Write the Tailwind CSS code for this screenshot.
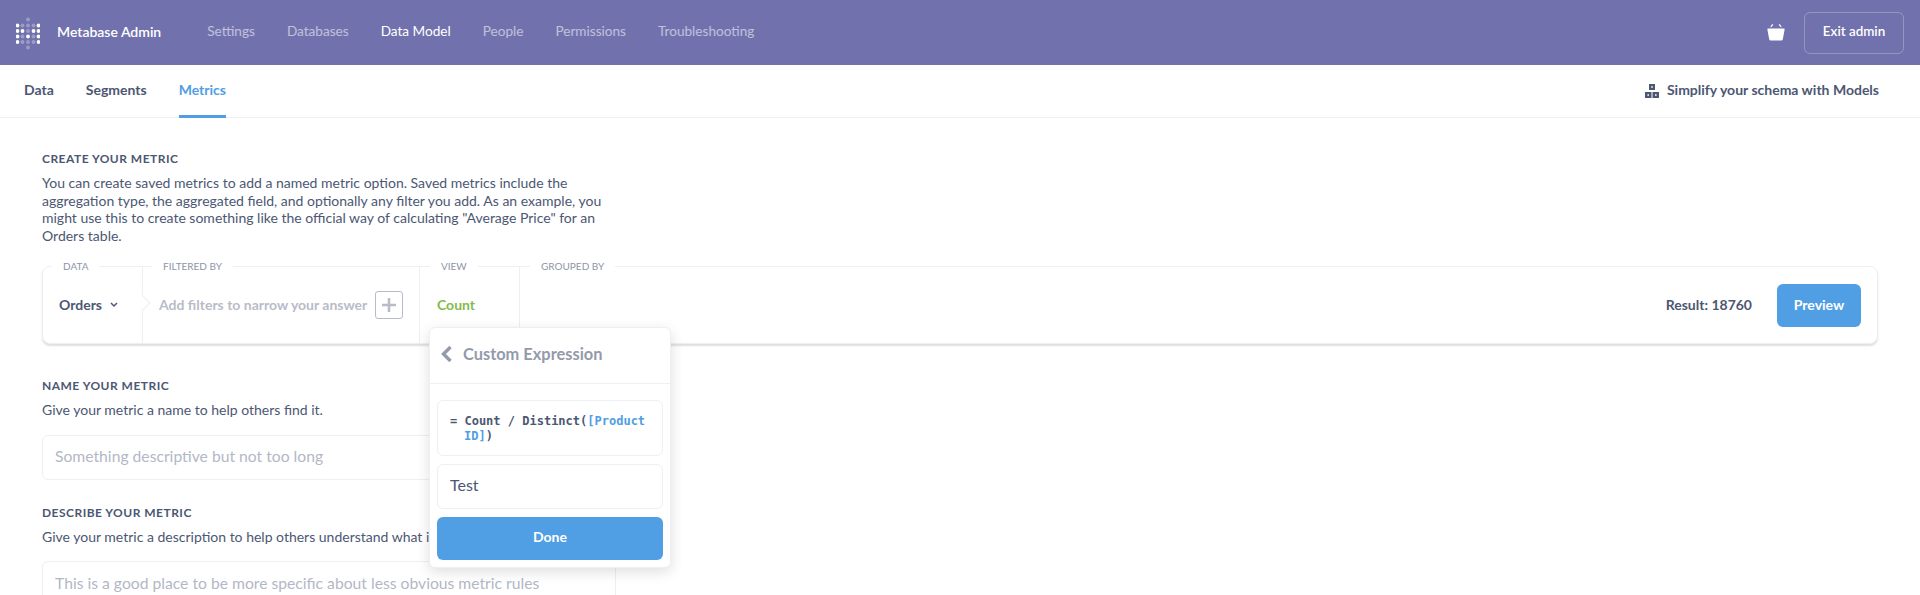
<!doctype html>
<html>
<head>
<meta charset="utf-8">
<script src="https://cdn.jsdelivr.net/npm/@tailwindcss/browser@4"></script>
</head>
<body class="font-['Lato','Liberation_Sans',sans-serif] bg-white text-[#4C5773] overflow-hidden">
<div class="relative h-[595px] overflow-hidden">
  <header class="h-[65px] bg-[#7172AD] flex items-center pl-4 pr-4 text-sm">
    <svg width="24" height="36" viewBox="0 0 24 36" class="shrink-0" fill="#fff">
      <g opacity=".3">
        <circle cx="12" cy="4.5" r="1.9"/><circle cx="12" cy="32.5" r="1.9"/>
        <circle cx="6.5" cy="10.5" r="1.9"/><circle cx="12" cy="10.5" r="1.9"/><circle cx="17.5" cy="10.5" r="1.9"/>
        <circle cx="12" cy="16" r="1.9"/>
        <circle cx="6.5" cy="21.5" r="1.9"/><circle cx="17.5" cy="21.5" r="1.9"/>
        <circle cx="6.5" cy="27" r="1.9"/><circle cx="12" cy="27" r="1.9"/><circle cx="17.5" cy="27" r="1.9"/>
      </g>
      <circle cx="1.5" cy="10.5" r="1.9"/><circle cx="22.5" cy="10.5" r="1.9"/>
      <circle cx="1.5" cy="16" r="1.9"/><circle cx="6.5" cy="16" r="1.9"/><circle cx="17.5" cy="16" r="1.9"/><circle cx="22.5" cy="16" r="1.9"/>
      <circle cx="1.5" cy="21.5" r="1.9"/><circle cx="12" cy="21.5" r="1.9"/><circle cx="22.5" cy="21.5" r="1.9"/>
      <circle cx="1.5" cy="27" r="1.9"/><circle cx="22.5" cy="27" r="1.9"/>
    </svg>
    <span class="ml-[17px] pb-[2px] text-white font-semibold">Metabase Admin</span>
    <nav class="ml-[46px] pb-[2px] flex gap-[32px] text-white/55 font-normal text-[13.6px]">
      <span>Settings</span><span>Databases</span><span class="text-white">Data Model</span><span>People</span><span>Permissions</span><span>Troubleshooting</span>
    </nav>
    <svg width="18" height="17" viewBox="0 0 18 17" class="ml-auto mr-[19px]" fill="#fff">
      <path d="M0.5 4.5h17v1.8l-1.7 9a1.6 1.6 0 0 1-1.6 1.3H3.8a1.6 1.6 0 0 1-1.6-1.3L0.5 6.3z"/>
      <path d="M3.8 3L5.8 0.3M14.2 3L12.2 0.3" stroke="#fff" stroke-width="1.2" fill="none"/>
    </svg>
    <span class="w-[100px] h-[42px] pb-[2px] flex items-center justify-center rounded-md border border-white/25 text-white font-semibold text-[13.4px]">Exit admin</span>
  </header>

  <div class="h-[53px] border-b border-[#EDEFF2] flex items-stretch px-6 text-sm font-bold">
    <div class="flex gap-8">
      <span class="flex items-center pb-[3px]">Data</span>
      <span class="flex items-center pb-[3px]">Segments</span>
      <span class="flex items-center text-[#509EE3] border-b-[3px] border-[#509EE3] -mb-px">Metrics</span>
    </div>
    <div class="ml-auto flex items-center gap-2 pr-[17px] pb-[2px]">
      <svg width="14" height="14" viewBox="0 0 14 14" fill="#4C5773" fill-rule="evenodd" class="mt-[2px]">
        <path d="M4 0h6v6H4zM6.2 2.2v1.6h1.6V2.2zM0 8h6.5v6H0zM2.4 10.2v1.6H4v-1.6zM7.5 8H14v6H7.5zM10 10.2v1.6h1.6v-1.6z"/>
      </svg>
      <span>Simplify your schema with Models</span>
    </div>
  </div>

  <main class="px-[42px]">
    <section class="pt-[35px] w-[574px]">
      <h2 class="text-xs font-bold tracking-[0.04em] leading-[12px]">CREATE YOUR METRIC</h2>
      <p class="mt-[9px] text-sm leading-[17.5px]">You can create saved metrics to add a named metric option. Saved metrics include the aggregation type, the aggregated field, and optionally any filter you add. As an example, you might use this to create something like the official way of calculating "Average Price" for an Orders table.</p>
    </section>

    <div class="relative mt-[22px] w-[1836px] h-[78px] rounded-lg border border-[#EDEFF2] bg-white shadow-[0_2px_2px_rgba(0,0,0,0.13)] flex items-stretch text-sm font-bold">
      <div class="relative w-[100px] flex items-center pl-4 border-r border-[#EDEFF2] gap-2">
        <span>Orders</span>
        <svg width="8" height="6" viewBox="0 0 8 6" fill="none" stroke="#4C5773" stroke-width="1.5"><path d="M1 1l3 3 3-3"/></svg>
        <span class="absolute -right-[6px] top-[30px] size-[12px] rotate-45 border-t border-r border-[#EDEFF2] bg-white"></span>
      </div>
      <div class="w-[277px] flex items-center pl-[16px] border-r border-[#EDEFF2] gap-2 text-[#B9BCC8]">
        <span>Add filters to narrow your answer</span>
        <span class="size-[28px] rounded-[3px] border border-[#B9BCC8] flex items-center justify-center">
          <svg width="16" height="16" viewBox="0 0 16 16" fill="#B9BCC8"><path d="M6.7 1h2.6v5.7H15v2.6H9.3V15H6.7V9.3H1V6.7h5.7z"/></svg>
        </span>
      </div>
      <div class="w-[100px] flex items-center pl-[17px] border-r border-[#EDEFF2] text-[#84BB4C]">Count</div>
      <div class="flex-1 flex items-center justify-end pr-4 gap-[25px]">
        <span>Result: 18760</span>
        <span class="w-[84px] h-[43px] rounded-md bg-[#509EE3] text-white flex items-center justify-center">Preview</span>
      </div>
      <span class="absolute left-[9px] -top-[7px] bg-white px-[11px] text-[10px] leading-[12px] text-[#8E95A8] font-normal">DATA</span>
      <span class="absolute left-[109px] -top-[7px] bg-white px-[11px] text-[10px] leading-[12px] text-[#8E95A8] font-normal">FILTERED BY</span>
      <span class="absolute left-[387px] -top-[7px] bg-white px-[11px] text-[10px] leading-[12px] text-[#8E95A8] font-normal">VIEW</span>
      <span class="absolute left-[487px] -top-[7px] bg-white px-[11px] text-[10px] leading-[12px] text-[#8E95A8] font-normal">GROUPED BY</span>
    </div>

    <section class="pt-[36px] w-[574px]">
      <h2 class="text-xs font-bold tracking-[0.04em] leading-[12px]">NAME YOUR METRIC</h2>
      <p class="mt-[9px] text-sm leading-[17.5px]">Give your metric a name to help others find it.</p>
      <div class="mt-[16px] h-[45px] rounded-md border border-[#EDEFF2] flex items-center pl-3 text-[15.7px] text-[#B3B7C6]">Something descriptive but not too long</div>
    </section>
    <section class="pt-[27px] w-[574px]">
      <h2 class="text-xs font-bold tracking-[0.04em] leading-[12px]">DESCRIBE YOUR METRIC</h2>
      <p class="mt-[9px] text-sm leading-[17.5px]">Give your metric a description to help others understand what it's about.</p>
      <div class="mt-[16px] h-[72px] rounded-md border border-[#EDEFF2] pl-3 pt-[11px] text-[15.7px] leading-[20px] text-[#B3B7C6]">This is a good place to be more specific about less obvious metric rules</div>
    </section>
  </main>

  <div class="absolute left-[429px] top-[327px] w-[242px] h-[241px] rounded-md bg-white border border-[#EDEFF2] shadow-[0_4px_14px_rgba(0,0,0,0.13)]">
    <div class="h-[56px] pb-[3px] border-b border-[#EDEFF2] flex items-center pl-[11px] gap-[11px] text-[16.4px] font-bold text-[#949AAB]">
      <svg width="11" height="16" viewBox="0 0 11 16" fill="none" stroke="#949AAB" stroke-width="3.4"><path d="M9.5 1L2.5 8l7 7"/></svg>
      <span>Custom Expression</span>
    </div>
    <div class="px-[7px] pt-[16px] flex flex-col gap-2">
      <div class="h-[56px] rounded-md border border-[#EDEFF2] pl-3 pt-[13px] font-['DejaVu_Sans_Mono',monospace] text-xs leading-[15px] font-bold">
        <div>= Count / Distinct(<span class="text-[#509EE3]">[Product</span></div>
        <div class="pl-[14px]"><span class="text-[#509EE3]">ID]</span>)</div>
      </div>
      <div class="h-[45px] pb-[3px] rounded-md border border-[#EDEFF2] flex items-center pl-3 text-base">Test</div>
      <div class="h-[43px] pb-[3px] rounded-md bg-[#509EE3] text-white text-sm font-bold flex items-center justify-center">Done</div>
    </div>
  </div>
</div>
</body>
</html>
